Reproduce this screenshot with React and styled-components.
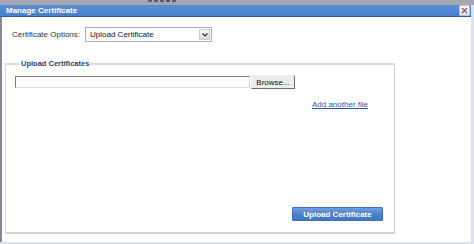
import React from "react";
import styled, { createGlobalStyle } from "styled-components";

const Global = createGlobalStyle`
  html, body { margin: 0; padding: 0; background: #dfe0ee; }
  body { font-family: "Liberation Sans", Arial, sans-serif; font-size: 8px; }
`;

const Page = styled.div`
  width: 474px;
  height: 244px;
  background: #dfe0ee;
  display: flex;
  flex-direction: column;
  overflow: hidden;
`;

const BackStrip = styled.div`
  height: 5px;
  background: #a4a6b2;
  display: flex;
  align-items: flex-start;
  gap: 2px;
  padding-left: 148px;
`;

const BackMark = styled.span`
  width: ${(p) => p.w}px;
  height: 2px;
  background: #5a5a70;
`;

const Dialog = styled.div`
  width: 471px;
  height: 237px;
  display: flex;
  flex-direction: column;
`;

const TitleBar = styled.div`
  height: 11px;
  background: linear-gradient(#5a8fd8, #4a7fcc);
  border-bottom: 1px solid #2d5a9c;
  display: flex;
  align-items: center;
  justify-content: space-between;
  padding: 0 1px 0 6px;
`;

const Title = styled.span`
  color: #fff;
  font-weight: bold;
  font-size: 8px;
  line-height: 11px;
`;

const CloseBtn = styled.div`
  width: 9px;
  height: 9px;
  background: linear-gradient(#ffffff, #dfe4ee);
  border: 1px solid #b5c2da;
  border-radius: 1px;
  display: flex;
  align-items: center;
  justify-content: center;
`;

const Body = styled.div`
  flex: 1;
  background: #fff;
  border-left: 2px solid #85859b;
  padding: 10px 0 0 3px;
  display: flex;
  flex-direction: column;
`;

const OptionsRow = styled.div`
  display: flex;
  align-items: center;
  gap: 5px;
  padding-left: 7px;
  height: 15px;
`;

const Label = styled.span`
  color: #333;
`;

const Select = styled.div`
  width: 125px;
  height: 13px;
  border: 1px solid #a9afb8;
  display: flex;
  align-items: center;
  justify-content: space-between;
  background: #fff;
`;

const SelectText = styled.span`
  color: #111;
  padding-left: 4px;
`;

const SelectArrow = styled.div`
  width: 11px;
  height: 11px;
  margin-right: 1px;
  background: linear-gradient(#f4f6f9, #d8dde5);
  border: 1px solid #c5ccd6;
  display: flex;
  align-items: center;
  justify-content: center;
  box-sizing: border-box;
`;

const Fieldset = styled.fieldset`
  margin: 17px 0 0 0;
  width: 390px;
  height: 175px;
  box-sizing: border-box;
  border-style: solid;
  border-width: 2px 1px 2px 1px;
  border-color: #dcdcdc #cfcfcf #d2d2d2 #d8d8d8;
  padding: 7px 11px 0 9px;
`;

const Legend = styled.legend`
  color: #1f3f7a;
  font-weight: bold;
  font-size: 7.5px;
  padding: 0 1px;
  margin-left: 5px;
`;

const Content = styled.div`
  height: 146px;
  display: flex;
  flex-direction: column;
`;

const FileRow = styled.div`
  display: flex;
  align-items: center;
  gap: 1px;
`;

const FileInput = styled.div`
  width: 233px;
  height: 10px;
  border: 1px solid #7a7a7a;
  border-right-color: #d0d0d0;
  border-bottom-color: #e0e0e0;
  background: #fff;
`;

const BrowseBtn = styled.div`
  width: 42px;
  height: 12px;
  border: 1px solid;
  border-color: #f0f0f0 #707070 #707070 #f0f0f0;
  background: #ececec;
  color: #111;
  display: flex;
  align-items: center;
  justify-content: center;
`;

const LinkRow = styled.div`
  display: flex;
  justify-content: flex-end;
  padding-right: 15px;
  margin-top: 11px;
`;

const Link = styled.a`
  color: #2b55b8;
  text-decoration: underline;
`;

const Spacer = styled.div`
  flex: 1;
`;

const ButtonRow = styled.div`
  display: flex;
  justify-content: flex-end;
`;

const PrimaryBtn = styled.div`
  width: 89px;
  height: 12px;
  background: linear-gradient(#6e9ee0, #4a7fcc 55%, #4277c4);
  border: 1px solid #3d6fbb;
  border-radius: 1px;
  color: #fff;
  font-weight: bold;
  display: flex;
  align-items: center;
  justify-content: center;
`;

export default function App() {
  return (
    <>
      <Global />
      <Page>
        <BackStrip>
          <BackMark w={4} />
          <BackMark w={4} />
          <BackMark w={4} />
          <BackMark w={4} />
          <BackMark w={4} />
        </BackStrip>
        <Dialog>
          <TitleBar>
            <Title>Manage Certificate</Title>
            <CloseBtn>
              <svg width="7" height="7" viewBox="0 0 7 7">
                <path d="M1 1 L6 6 M6 1 L1 6" stroke="#8a5a66" strokeWidth="1.3" />
              </svg>
            </CloseBtn>
          </TitleBar>
          <Body>
            <OptionsRow>
              <Label>Certificate Options:</Label>
              <Select>
                <SelectText>Upload Certificate</SelectText>
                <SelectArrow>
                  <svg width="6" height="4" viewBox="0 0 6 4">
                    <path d="M0.5 0.5 L3 3 L5.5 0.5" stroke="#333" strokeWidth="1.2" fill="none" />
                  </svg>
                </SelectArrow>
              </Select>
            </OptionsRow>
            <Fieldset>
              <Legend>Upload Certificates</Legend>
              <Content>
                <FileRow>
                  <FileInput />
                  <BrowseBtn>Browse...</BrowseBtn>
                </FileRow>
                <LinkRow>
                  <Link>Add another file</Link>
                </LinkRow>
                <Spacer />
                <ButtonRow>
                  <PrimaryBtn>Upload Certificate</PrimaryBtn>
                </ButtonRow>
              </Content>
            </Fieldset>
          </Body>
        </Dialog>
      </Page>
    </>
  );
}
